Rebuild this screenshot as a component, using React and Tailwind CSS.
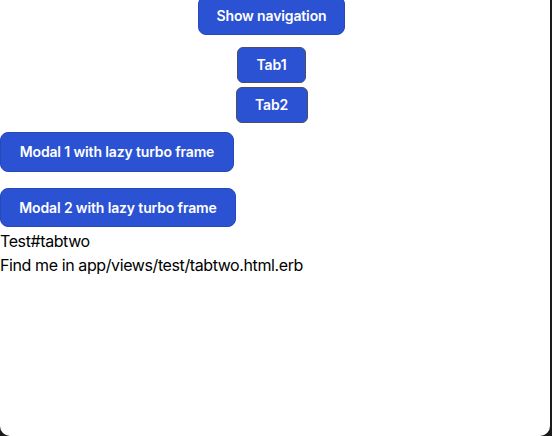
import React from "react";

export default function App() {
  const font = { fontFamily: "Inter, 'Noto Sans', sans-serif" };
  return (
    <div className="w-[552px] h-[436px] bg-[#1b1b1b] overflow-hidden" style={font}>
      <div className="w-[550px] h-[436px] bg-white rounded-b-[10px] overflow-hidden">
        <div className="w-[543px] flex flex-col items-center">
          <button className="-mt-[4px] h-[39px] w-[147px] rounded-lg bg-[#2b52d3] border border-[#2748b8] text-white text-sm font-semibold tracking-[-0.01em]">
            Show navigation
          </button>
          <button className="mt-[12px] h-[36px] w-[69px] rounded-md bg-[#2b52d3] border border-[#4a4f66] text-white text-sm font-semibold tracking-[-0.01em]">
            Tab1
          </button>
          <button className="mt-[4px] h-[36px] w-[72px] rounded-md bg-[#2b52d3] border border-[#4a4f66] text-white text-sm font-semibold tracking-[-0.01em]">
            Tab2
          </button>
        </div>
        <div className="flex flex-col items-start">
          <button className="mt-[9px] h-[40px] w-[234px] rounded-lg bg-[#2b52d3] border border-[#2748b8] text-white text-sm font-semibold tracking-[-0.01em]">
            Modal 1 with lazy turbo frame
          </button>
          <button className="mt-[16px] h-[39px] w-[236px] rounded-lg bg-[#2b52d3] border border-[#2748b8] text-white text-sm font-semibold tracking-[-0.01em]">
            Modal 2 with lazy turbo frame
          </button>
        </div>
        <div className="mt-[2px] text-base leading-6 text-black tracking-[-0.025em]">
          <p>Test#tabtwo</p>
          <p>Find me in app/views/test/tabtwo.html.erb</p>
        </div>
      </div>
    </div>
  );
}
